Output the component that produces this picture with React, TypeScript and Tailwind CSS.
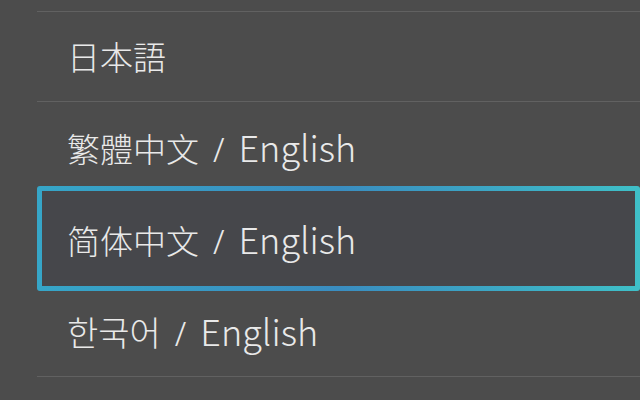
import React from "react";

function Label({ cjk, en, cjkClass }: { cjk: string; en?: string; cjkClass: string }) {
  return (
    <span className="whitespace-nowrap">
      <span className={cjkClass}>{cjk}</span>
      {en && (
        <>
          <span className="mx-[14px] text-[33px] font-['Noto_Sans',sans-serif] font-light">/</span>
          <span className="text-[36px] font-['Noto_Sans_CJK_JP',sans-serif] font-light">{en}</span>
        </>
      )}
    </span>
  );
}

export default function App() {
  return (
    <div className="w-[640px] h-[400px] bg-[#4c4c4c] overflow-hidden pt-[11px] pl-[37px] text-[#e9e9e9] text-[33px] font-light leading-none">
      <div className="border-t border-[#616161]" />
      <div className="h-[90px] flex items-center pl-[30px] border-b border-[#616161]">
        <Label cjk="日本語" cjkClass="text-[33px] font-['Noto_Sans_CJK_JP',sans-serif]" />
      </div>
      <div className="h-[84px] pt-[6px] flex items-center pl-[30px]">
        <Label cjk="繁體中文" en="English" cjkClass="text-[33px] font-['Noto_Sans_CJK_TC',sans-serif]" />
      </div>
      <div className="h-[105px] rounded-[3px] p-[5px] bg-gradient-to-r from-[#36a6c8] via-[#3a8dc0] to-[#3fc0c8]">
        <div className="h-full bg-[#46474b] flex items-center pl-[25px]">
          <Label cjk="简体中文" en="English" cjkClass="text-[33px] font-['Noto_Sans_CJK_SC',sans-serif]" />
        </div>
      </div>
      <div className="h-[86px] pb-[6px] flex items-center pl-[30px] border-b border-[#616161]">
        <Label cjk="한국어" en="English" cjkClass="text-[34px] font-['Noto_Sans_CJK_KR',sans-serif]" />
      </div>
    </div>
  );
}
